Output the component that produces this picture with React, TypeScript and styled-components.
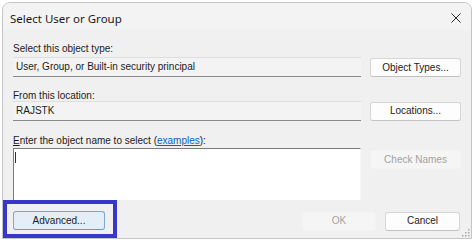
import styled, { createGlobalStyle } from 'styled-components';

const GlobalStyle = createGlobalStyle`
  html, body {
    margin: 0;
    padding: 0;
    background: #ffffff;
  }
  body {
    width: 474px;
    height: 241px;
    overflow: hidden;
    font-family: "Liberation Sans", Arial, sans-serif;
  }
`;

const Page = styled.div`
  padding: 2px 2px 0 2px;
  box-sizing: border-box;
  height: 241px;
`;

const Window = styled.div`
  position: relative;
  width: 470px;
  height: 237px;
  box-sizing: border-box;
  border: 1px solid #c4c4c4;
  border-radius: 8px 8px 0 0;
  background: #f0f0f0;
  overflow: hidden;
  display: flex;
  flex-direction: column;
`;

const TitleBar = styled.div`
  height: 27px;
  flex: none;
  display: flex;
  align-items: center;
  justify-content: space-between;
  padding: 0 10px 0 7px;
  background: #f3f3f3;
`;

const Title = styled.span`
  font-family: "Noto Sans", "Liberation Sans", sans-serif;
  font-size: 11.5px;
  color: #1a1a1a;
  margin-top: 3px;
`;

const CloseIcon = styled.svg`
  width: 10px;
  height: 10px;
  margin-top: 3px;
`;

const Content = styled.div`
  flex: 1;
  display: flex;
  flex-direction: column;
  padding: 13px 10px 0 10px;
`;

const Label = styled.div<{ $mt?: number }>`
  font-size: 10px;
  line-height: 11px;
  color: #1b1b1b;
  margin-top: ${(p) => p.$mt ?? 0}px;
  white-space: nowrap;
`;

const AccessKey = styled.span`
  text-decoration: underline;
`;

const Link = styled.span`
  color: #0a5fc4;
  text-decoration: underline;
`;

const Row = styled.div<{ $mt?: number }>`
  display: grid;
  grid-template-columns: 348px 91px;
  column-gap: 9px;
  margin-top: ${(p) => p.$mt ?? 0}px;
`;

const Field = styled.div`
  height: 20px;
  box-sizing: border-box;
  background: #f3f3f3;
  border-top: 1px solid #dedede;
  border-bottom: 1px solid #8a8a8a;
  padding: 3px 0 0 3px;
  font-size: 10px;
  line-height: 12px;
  color: #1b1b1b;
`;

const TextArea = styled.div`
  position: relative;
  height: 52px;
  box-sizing: border-box;
  background: #ffffff;
  border-top: 1px solid #7c7c7c;
  border-left: 1px solid #7c7c7c;
  border-right: 1px solid #f7f7f7;
`;

const Caret = styled.span`
  position: absolute;
  left: 1px;
  top: 3px;
  width: 1px;
  height: 11px;
  background: #333;
`;

const Button = styled.div<{ $variant?: 'normal' | 'disabled' | 'focus'; $w?: number; $align?: string }>`
  height: 19px;
  box-sizing: border-box;
  width: ${(p) => (p.$w ? `${p.$w}px` : 'auto')};
  align-self: ${(p) => p.$align ?? 'center'};
  display: flex;
  align-items: center;
  justify-content: center;
  border-radius: 3px;
  font-size: 10px;
  line-height: 12px;
  white-space: nowrap;
  background: ${(p) =>
    p.$variant === 'disabled' ? '#f5f5f5' : p.$variant === 'focus' ? '#e3eef9' : '#fdfdfd'};
  border: 1px solid
    ${(p) =>
      p.$variant === 'disabled' ? '#f3f3f3' : p.$variant === 'focus' ? '#7fa6d3' : '#d6d6d6'};
  border-bottom-color: ${(p) =>
    p.$variant === 'disabled' ? '#f3f3f3' : p.$variant === 'focus' ? '#6e98c9' : '#c2c2c2'};
  color: ${(p) => (p.$variant === 'disabled' ? '#a2a2a2' : '#1b1b1b')};
`;

const BottomRow = styled.div`
  display: flex;
  align-items: flex-end;
  height: 20px;
  margin-top: 11px;
  padding-right: 1px;
`;

const Highlight = styled.div`
  position: relative;
  align-self: flex-start;
  &::after {
    content: '';
    position: absolute;
    left: -10px;
    top: -11px;
    right: -12px;
    bottom: -8px;
    border: 4px solid #3838c8;
  }
`;

const Spacer = styled.div`
  flex: 1;
`;

const ButtonGap = styled.div`
  width: 9px;
`;

const Grip = styled.svg`
  position: absolute;
  right: 1px;
  bottom: 1px;
  width: 9px;
  height: 9px;
`;

export default function App() {
  return (
    <>
      <GlobalStyle />
      <Page>
        <Window>
          <TitleBar>
            <Title>Select User or Group</Title>
            <CloseIcon viewBox="0 0 10 10">
              <path d="M0.5 0.5 L9.5 9.5 M9.5 0.5 L0.5 9.5" stroke="#2b2b2b" strokeWidth="1" />
            </CloseIcon>
          </TitleBar>
          <Content>
            <Label>Select this object type:</Label>
            <Row $mt={3}>
              <Field>User, Group, or Built-in security principal</Field>
              <Button $align="end">Object Types...</Button>
            </Row>
            <Label $mt={13}>From this location:</Label>
            <Row>
              <Field>RAJSTK</Field>
              <Button>Locations...</Button>
            </Row>
            <Label $mt={14}>
              <AccessKey>E</AccessKey>nter the object name to select (<Link>examples</Link>):
            </Label>
            <Row $mt={2}>
              <TextArea>
                <Caret />
              </TextArea>
              <Button $variant="disabled" $align="start" style={{ marginTop: 2 }}>
                Check Names
              </Button>
            </Row>
            <BottomRow>
              <Highlight>
                <Button $variant="focus" $w={92}>
                  Advanced...
                </Button>
              </Highlight>
              <Spacer />
              <Button $variant="disabled" $w={74}>
                OK
              </Button>
              <ButtonGap />
              <Button $w={75}>Cancel</Button>
            </BottomRow>
          </Content>
          <Grip viewBox="0 0 9 9">
            {[
              [7, 1],
              [7, 4],
              [4, 4],
              [7, 7],
              [4, 7],
              [1, 7],
            ].map(([x, y]) => (
              <rect key={`${x}-${y}`} x={x} y={y} width="1.5" height="1.5" fill="#a8a8a8" />
            ))}
          </Grip>
        </Window>
      </Page>
    </>
  );
}
